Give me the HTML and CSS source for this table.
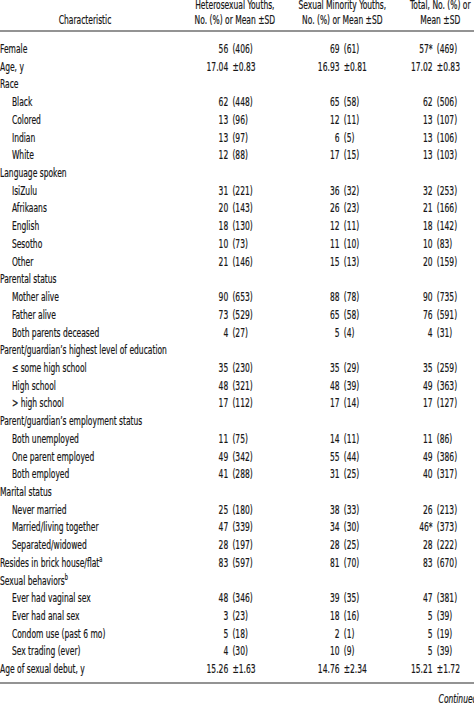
FILE: index.html
```html
<!DOCTYPE html>
<html>
<head>
<meta charset="utf-8">
<link rel="stylesheet" href="styles.css">
</head>
<body>
<div class="page">
  <div class="table">
    <div class="head">
      <div class="hc hc1">Characteristic</div>
      <div class="hc">Heterosexual Youths,<br>No. (%) or Mean ±SD</div>
      <div class="hc">Sexual Minority Youths,<br>No. (%) or Mean ±SD</div>
      <div class="hc hc4">Total, No. (%) or<br>Mean ±SD</div>
    </div>
    <div class="body">
      <div class="row"><div class="lab">Female</div><div class="v c2"><span class="a">56</span><span class="b">(406)</span></div><div class="v c3"><span class="a">69</span><span class="b">(61)</span></div><div class="v c4"><span class="a">57*</span><span class="b">(469)</span></div></div>
      <div class="row"><div class="lab">Age, y</div><div class="v c2"><span class="a">17.04</span><span class="b">±0.83</span></div><div class="v c3"><span class="a">16.93</span><span class="b">±0.81</span></div><div class="v c4"><span class="a">17.02</span><span class="b">±0.83</span></div></div>
      <div class="row"><div class="lab">Race</div></div>
      <div class="row"><div class="lab ind">Black</div><div class="v c2"><span class="a">62</span><span class="b">(448)</span></div><div class="v c3"><span class="a">65</span><span class="b">(58)</span></div><div class="v c4"><span class="a">62</span><span class="b">(506)</span></div></div>
      <div class="row"><div class="lab ind">Colored</div><div class="v c2"><span class="a">13</span><span class="b">(96)</span></div><div class="v c3"><span class="a">12</span><span class="b">(11)</span></div><div class="v c4"><span class="a">13</span><span class="b">(107)</span></div></div>
      <div class="row"><div class="lab ind">Indian</div><div class="v c2"><span class="a">13</span><span class="b">(97)</span></div><div class="v c3"><span class="a">6</span><span class="b">(5)</span></div><div class="v c4"><span class="a">13</span><span class="b">(106)</span></div></div>
      <div class="row"><div class="lab ind">White</div><div class="v c2"><span class="a">12</span><span class="b">(88)</span></div><div class="v c3"><span class="a">17</span><span class="b">(15)</span></div><div class="v c4"><span class="a">13</span><span class="b">(103)</span></div></div>
      <div class="row"><div class="lab">Language spoken</div></div>
      <div class="row"><div class="lab ind">IsiZulu</div><div class="v c2"><span class="a">31</span><span class="b">(221)</span></div><div class="v c3"><span class="a">36</span><span class="b">(32)</span></div><div class="v c4"><span class="a">32</span><span class="b">(253)</span></div></div>
      <div class="row"><div class="lab ind">Afrikaans</div><div class="v c2"><span class="a">20</span><span class="b">(143)</span></div><div class="v c3"><span class="a">26</span><span class="b">(23)</span></div><div class="v c4"><span class="a">21</span><span class="b">(166)</span></div></div>
      <div class="row"><div class="lab ind">English</div><div class="v c2"><span class="a">18</span><span class="b">(130)</span></div><div class="v c3"><span class="a">12</span><span class="b">(11)</span></div><div class="v c4"><span class="a">18</span><span class="b">(142)</span></div></div>
      <div class="row"><div class="lab ind">Sesotho</div><div class="v c2"><span class="a">10</span><span class="b">(73)</span></div><div class="v c3"><span class="a">11</span><span class="b">(10)</span></div><div class="v c4"><span class="a">10</span><span class="b">(83)</span></div></div>
      <div class="row"><div class="lab ind">Other</div><div class="v c2"><span class="a">21</span><span class="b">(146)</span></div><div class="v c3"><span class="a">15</span><span class="b">(13)</span></div><div class="v c4"><span class="a">20</span><span class="b">(159)</span></div></div>
      <div class="row"><div class="lab">Parental status</div></div>
      <div class="row"><div class="lab ind">Mother alive</div><div class="v c2"><span class="a">90</span><span class="b">(653)</span></div><div class="v c3"><span class="a">88</span><span class="b">(78)</span></div><div class="v c4"><span class="a">90</span><span class="b">(735)</span></div></div>
      <div class="row"><div class="lab ind">Father alive</div><div class="v c2"><span class="a">73</span><span class="b">(529)</span></div><div class="v c3"><span class="a">65</span><span class="b">(58)</span></div><div class="v c4"><span class="a">76</span><span class="b">(591)</span></div></div>
      <div class="row"><div class="lab ind">Both parents deceased</div><div class="v c2"><span class="a">4</span><span class="b">(27)</span></div><div class="v c3"><span class="a">5</span><span class="b">(4)</span></div><div class="v c4"><span class="a">4</span><span class="b">(31)</span></div></div>
      <div class="row"><div class="lab">Parent/guardian’s highest level of education</div></div>
      <div class="row"><div class="lab ind">≤ some high school</div><div class="v c2"><span class="a">35</span><span class="b">(230)</span></div><div class="v c3"><span class="a">35</span><span class="b">(29)</span></div><div class="v c4"><span class="a">35</span><span class="b">(259)</span></div></div>
      <div class="row"><div class="lab ind">High school</div><div class="v c2"><span class="a">48</span><span class="b">(321)</span></div><div class="v c3"><span class="a">48</span><span class="b">(39)</span></div><div class="v c4"><span class="a">49</span><span class="b">(363)</span></div></div>
      <div class="row"><div class="lab ind">&gt; high school</div><div class="v c2"><span class="a">17</span><span class="b">(112)</span></div><div class="v c3"><span class="a">17</span><span class="b">(14)</span></div><div class="v c4"><span class="a">17</span><span class="b">(127)</span></div></div>
      <div class="row"><div class="lab">Parent/guardian’s employment status</div></div>
      <div class="row"><div class="lab ind">Both unemployed</div><div class="v c2"><span class="a">11</span><span class="b">(75)</span></div><div class="v c3"><span class="a">14</span><span class="b">(11)</span></div><div class="v c4"><span class="a">11</span><span class="b">(86)</span></div></div>
      <div class="row"><div class="lab ind">One parent employed</div><div class="v c2"><span class="a">49</span><span class="b">(342)</span></div><div class="v c3"><span class="a">55</span><span class="b">(44)</span></div><div class="v c4"><span class="a">49</span><span class="b">(386)</span></div></div>
      <div class="row"><div class="lab ind">Both employed</div><div class="v c2"><span class="a">41</span><span class="b">(288)</span></div><div class="v c3"><span class="a">31</span><span class="b">(25)</span></div><div class="v c4"><span class="a">40</span><span class="b">(317)</span></div></div>
      <div class="row"><div class="lab">Marital status</div></div>
      <div class="row"><div class="lab ind">Never married</div><div class="v c2"><span class="a">25</span><span class="b">(180)</span></div><div class="v c3"><span class="a">38</span><span class="b">(33)</span></div><div class="v c4"><span class="a">26</span><span class="b">(213)</span></div></div>
      <div class="row"><div class="lab ind">Married/living together</div><div class="v c2"><span class="a">47</span><span class="b">(339)</span></div><div class="v c3"><span class="a">34</span><span class="b">(30)</span></div><div class="v c4"><span class="a">46*</span><span class="b">(373)</span></div></div>
      <div class="row"><div class="lab ind">Separated/widowed</div><div class="v c2"><span class="a">28</span><span class="b">(197)</span></div><div class="v c3"><span class="a">28</span><span class="b">(25)</span></div><div class="v c4"><span class="a">28</span><span class="b">(222)</span></div></div>
      <div class="row"><div class="lab">Resides in brick house/flat<sup>a</sup></div><div class="v c2"><span class="a">83</span><span class="b">(597)</span></div><div class="v c3"><span class="a">81</span><span class="b">(70)</span></div><div class="v c4"><span class="a">83</span><span class="b">(670)</span></div></div>
      <div class="row"><div class="lab">Sexual behaviors<sup>b</sup></div></div>
      <div class="row"><div class="lab ind">Ever had vaginal sex</div><div class="v c2"><span class="a">48</span><span class="b">(346)</span></div><div class="v c3"><span class="a">39</span><span class="b">(35)</span></div><div class="v c4"><span class="a">47</span><span class="b">(381)</span></div></div>
      <div class="row"><div class="lab ind">Ever had anal sex</div><div class="v c2"><span class="a">3</span><span class="b">(23)</span></div><div class="v c3"><span class="a">18</span><span class="b">(16)</span></div><div class="v c4"><span class="a">5</span><span class="b">(39)</span></div></div>
      <div class="row"><div class="lab ind">Condom use (past 6 mo)</div><div class="v c2"><span class="a">5</span><span class="b">(18)</span></div><div class="v c3"><span class="a">2</span><span class="b">(1)</span></div><div class="v c4"><span class="a">5</span><span class="b">(19)</span></div></div>
      <div class="row"><div class="lab ind">Sex trading (ever)</div><div class="v c2"><span class="a">4</span><span class="b">(30)</span></div><div class="v c3"><span class="a">10</span><span class="b">(9)</span></div><div class="v c4"><span class="a">5</span><span class="b">(39)</span></div></div>
      <div class="row"><div class="lab">Age of sexual debut, y</div><div class="v c2"><span class="a">15.26</span><span class="b">±1.63</span></div><div class="v c3"><span class="a">14.76</span><span class="b">±2.34</span></div><div class="v c4"><span class="a">15.21</span><span class="b">±1.72</span></div></div>
    </div>
    <div class="foot">Continued</div>
  </div>
</div>
</body>
</html>
```
FILE: styles.css
```css
html, body {
  margin: 0;
  padding: 0;
  background: #ffffff;
  overflow: hidden;
}
.page {
  width: 474px;
  height: 705px;
  overflow: hidden;
}
/* the typeface of the original is an extra-condensed gothic: a condensed
   face compressed horizontally reproduces its proportions */
.table {
  width: 694px;
  margin-top: -2px;
  transform: scaleX(0.7);
  transform-origin: 0 0;
  font-family: "DejaVu Sans Condensed", "DejaVu Sans", sans-serif;
  font-stretch: condensed;
  font-size: 12px;
  color: #161616;
  -webkit-text-stroke: 0.2px #161616;
}
.head {
  display: grid;
  grid-template-columns: 257px 157px 150px 130px;
  align-items: end;
  line-height: 15px;
  padding-bottom: 2px;
  border-bottom: 2px solid #939393;
}
.hc {
  text-align: center;
  white-space: nowrap;
}
.hc1 {
  padding-right: 14px;
}
.body {
  padding: 9px 0 3px;
  border-bottom: 2px solid #939393;
}
.row {
  display: grid;
  grid-template-columns: 257px 157px 150px 130px;
  height: 17.72px;
  line-height: 17.72px;
  white-space: nowrap;
}
.lab.ind {
  padding-left: 17px;
}
.lab sup {
  font-size: 8px;
  line-height: 0;
  vertical-align: 5px;
}
.v {
  display: grid;
  column-gap: 6px;
}
.c2 { grid-template-columns: 69px auto; }
.c3 { grid-template-columns: 71px auto; }
.c4 { grid-template-columns: 54px auto; }
.v .a { text-align: right; }
.v .b { text-align: left; }
.foot {
  text-align: right;
  font-style: italic;
  padding-right: 12px;
  line-height: 15px;
  margin-top: 8px;
}
```
